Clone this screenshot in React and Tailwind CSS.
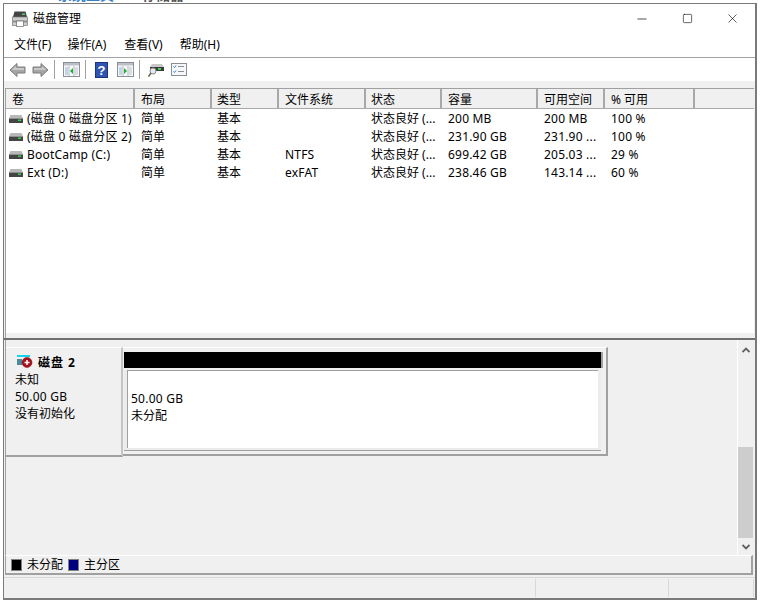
import { Minus, Square, X } from 'lucide-react'

const COLS = [
  { label: '卷', w: 'w-[129px]', pl: 'pl-[6px]', latin: true },
  { label: '布局', w: 'w-[77px]', pl: 'pl-[6px]' },
  { label: '类型', w: 'w-[67px]', pl: 'pl-[5px]' },
  { label: '文件系统', w: 'w-[87px]', pl: 'pl-[6px]', latin: true },
  { label: '状态', w: 'w-[76px]', pl: 'pl-[5px]' },
  { label: '容量', w: 'w-[96px]', pl: 'pl-[6px]', latin: true },
  { label: '可用空间', w: 'w-[67px]', pl: 'pl-[6px]', latin: true },
  { label: '% 可用', w: 'w-[90px]', pl: 'pl-[6px]', latin: true },
]

const ROWS = [
  ['(磁盘 0 磁盘分区 1)', '简单', '基本', '', '状态良好 (...', '200 MB', '200 MB', '100 %'],
  ['(磁盘 0 磁盘分区 2)', '简单', '基本', '', '状态良好 (...', '231.90 GB', '231.90 ...', '100 %'],
  ['BootCamp (C:)', '简单', '基本', 'NTFS', '状态良好 (...', '699.42 GB', '205.03 ...', '29 %'],
  ['Ext (D:)', '简单', '基本', 'exFAT', '状态良好 (...', '238.46 GB', '143.14 ...', '60 %'],
]

function DriveIcon() {
  return (
    <svg width="14" height="8" viewBox="0 0 14 8" className="shrink-0">
      <path d="M1.5 0h11L14 3.5H0z" fill="#b8b8b8" />
      <rect x="0" y="3.5" width="14" height="4.5" fill="#444444" />
      <rect x="9" y="4.5" width="3" height="1.5" fill="#35d04a" />
    </svg>
  )
}

function TitleIcon() {
  return (
    <svg width="16" height="16" viewBox="0 0 16 16">
      <path d="M2.5 0.5h11L15 6H1z" fill="#444444" />
      <rect x="10" y="2.5" width="3" height="1.5" fill="#4fd45f" />
      <rect x="0.5" y="6" width="15" height="8.5" fill="#cfcfcf" stroke="#777777" strokeWidth="0.7" />
      <rect x="0.5" y="9.5" width="15" height="2" fill="#8f8f8f" />
      <rect x="4.5" y="10" width="7" height="5.5" fill="#ffffff" stroke="#6a6a6a" strokeWidth="0.7" />
    </svg>
  )
}

function ArrowIcon({ flip }) {
  return (
    <svg width="17" height="16" viewBox="0 0 17 16" className={flip ? 'scale-x-[-1]' : ''}>
      <path d="M8 1.5 1 8l7 6.5V11h8V5H8z" fill="#a5a5a5" stroke="#7d7d7d" strokeWidth="1" />
      <path d="M7 4 2.5 8H15V6H7z" fill="#c9c9c9" />
    </svg>
  )
}

function PaneIcon({ right }) {
  return (
    <svg width="17" height="15" viewBox="0 0 17 15">
      <rect x="0.5" y="0.5" width="16" height="14" fill="#f7f8fa" stroke="#8a8f96" />
      <rect x="1" y="1" width="15" height="2.5" fill="#b9c0c8" />
      <path d="M6 4v10M11 4v10" stroke="#b4b9c0" />
      <path d="M2 6h3M2 8h3M2 10h3M2 12h3" stroke="#8fb0d4" />
      {right
        ? <path d="M7 6l3 3-3 3z" fill="#1cae3a" />
        : <path d="M10 6l-3 3 3 3z" fill="#1cae3a" />}
      <path d="M12 6h3M12 8h3M12 10h3M12 12h3" stroke="#bcc2c9" />
    </svg>
  )
}

function HelpIcon() {
  return (
    <svg width="13" height="16" viewBox="0 0 13 16">
      <rect width="13" height="16" fill="#2f55b0" />
      <rect x="0.5" y="0.5" width="12" height="15" fill="none" stroke="#1b3480" />
      <text x="6.5" y="12.5" textAnchor="middle" fontSize="13" fontWeight="700" fontFamily="Liberation Sans" fill="#fff">?</text>
    </svg>
  )
}

function SearchDriveIcon() {
  return (
    <svg width="16" height="16" viewBox="0 0 16 16">
      <path d="M4 2h10l2 3H2z" fill="#c8c8c8" />
      <rect x="2" y="5" width="14" height="4" fill="#3c3c3c" />
      <rect x="10" y="6" width="3" height="2" fill="#39d34e" />
      <circle cx="5" cy="9" r="3" fill="#dfeaf3" stroke="#8b8b8b" />
      <path d="M3 11 0.5 14.5" stroke="#6a5a45" strokeWidth="1.5" />
    </svg>
  )
}

function ChecklistIcon() {
  return (
    <svg width="16" height="13" viewBox="0 0 16 13">
      <rect x="0.5" y="0.5" width="15" height="12" fill="#f5f7f9" stroke="#8a8f96" />
      <path d="M2.5 3.5l1 1 1.5-2M2.5 8.5l1 1 1.5-2" stroke="#2c7fc9" fill="none" />
      <path d="M7 3.5h6M7 8.5h6" stroke="#8a8f96" />
    </svg>
  )
}

function DiskErrorIcon() {
  return (
    <svg width="16" height="14" viewBox="0 0 16 14">
      <rect x="0" y="0" width="13" height="2" fill="#19d3ea" />
      <rect x="0" y="4" width="5" height="6" fill="#4b8c9c" />
      <circle cx="10" cy="7.5" r="5" fill="#a80f1d" stroke="#7a0a14" strokeWidth="0.5" />
      <path d="M7.5 7.5h5M10 5v5" stroke="#fff" strokeWidth="1.5" />
    </svg>
  )
}

function Sep() {
  return <div className="w-px h-[19px] bg-[#a0a0a0]" />
}

export default function App() {
  return (
    <div className="w-[760px] h-[602px] overflow-hidden bg-white text-[12px] text-black" style={{ fontFamily: '"Noto Sans", "Noto Sans CJK SC", sans-serif' }}>
      {/* sliver of the window behind */}
      <div className="h-[3px] overflow-hidden flex pl-[58px] gap-[28px] font-bold text-[14px] leading-[14px]">
        <span className="-mt-[12px] text-[#3b7fc4]">系统工具</span>
        <span className="-mt-[12px] text-[#555555]">存储器</span>
      </div>

      <div className="ml-[3px] w-[754px] h-[597px] border border-[#7a7a7a] border-r-2 border-b-2 flex flex-col bg-[#f0f0f0]">
        {/* Title bar */}
        <div className="h-[29px] bg-white flex items-center shrink-0">
          <div className="ml-[8px] mr-[5px] flex"><TitleIcon /></div>
          <span className="text-[12px] flex-1">磁盘管理</span>
          <Minus size={14} strokeWidth={1.2} className="mr-[33px]" />
          <Square size={11} strokeWidth={1.3} className="mr-[32px]" />
          <X size={15} strokeWidth={1} className="mr-[15px]" />
        </div>

        {/* Menu */}
        <div className="h-[25px] bg-white flex items-center pl-[10px] border-b border-[#a3a3a3] shrink-0">
          <span className="mr-[16px]">文件(F)</span>
          <span className="mr-[18px]">操作(A)</span>
          <span className="mr-[17px]">查看(V)</span>
          <span>帮助(H)</span>
        </div>

        {/* Toolbar */}
        <div className="h-[23px] bg-white flex items-center pl-[5px] shrink-0">
          <ArrowIcon />
          <div className="w-[6px]" />
          <ArrowIcon flip />
          <div className="w-[5px]" />
          <Sep />
          <div className="w-[8px]" />
          <PaneIcon />
          <div className="w-[5px]" />
          <Sep />
          <div className="w-[9px]" />
          <HelpIcon />
          <div className="w-[9px]" />
          <PaneIcon right />
          <div className="w-[5px]" />
          <Sep />
          <div className="w-[8px]" />
          <SearchDriveIcon />
          <div className="w-[7px]" />
          <ChecklistIcon />
        </div>

        <div className="h-[7px] shrink-0" />

        {/* Volume list */}
        <div className="h-[250px] ml-px mr-px border-l border-t border-[#a0a0a0] bg-white flex flex-col shrink-0">
          <div className="h-[20px] flex bg-[#f0f0f0] shrink-0">
            {COLS.map(c => (
              <div key={c.label} className={`${c.w} ${c.pl} shrink-0 pt-[2px] flex items-center border-r-2 border-b border-[#a8a8a8]`}>{c.label}</div>
            ))}
            <div className="flex-1 border-b border-[#a8a8a8]" />
          </div>
          <div className="flex-1 pt-[1px]">
            {ROWS.map(row => (
              <div key={row[0]} className="h-[18px] flex items-center">
                {row.map((cell, i) => (
                  <div key={i} className={`${COLS[i].w} shrink-0 whitespace-nowrap overflow-hidden flex items-center ${i === 0 ? 'pl-[3px] gap-[4px]' : COLS[i].pl} ${COLS[i].latin ? 'tracking-[0.2px]' : ''}`}>
                    {i === 0 && <DriveIcon />}
                    <span>{cell}</span>
                  </div>
                ))}
              </div>
            ))}
          </div>
          <div className="h-[5px] bg-[#f0f0f0] shrink-0" />
        </div>

        {/* Splitter */}
        <div className="h-[2px] bg-[#707070] shrink-0" />

        {/* Disk pane */}
        <div className="h-[215px] flex ml-px mr-[2px] border-l border-[#a0a0a0] shrink-0">
          <div className="flex-1 pt-[7px] flex items-start">
            <div className="w-[117px] h-[110px] bg-[#f0f0f0] border-t border-white border-r-2 border-b-2 border-r-[#c4c4c4] border-b-[#a0a0a0] pl-[9px] pt-[5px] leading-[17px] shrink-0">
              <div className="flex items-center gap-[5px] font-bold h-[18px] ml-[2px] tracking-[1px]">
                <DiskErrorIcon />
                <span>磁盘 2</span>
              </div>
              <div>未知</div>
              <div className="tracking-[0.25px]">50.00 GB</div>
              <div>没有初始化</div>
            </div>
            <div className="w-[485px] h-[109px] border-t border-white border-r-2 border-b-2 border-r-[#a0a0a0] border-b-[#a0a0a0] pl-[1px] pt-[4px] pr-[3px] pb-[3px] flex flex-col">
              <div className="h-[16px] bg-black border-r-2 border-[#a0a0a0] shrink-0" />
              <div className="mt-[2px] mr-[2px] flex-1 bg-[#ececec] border-b border-[#a0a0a0] pl-[3px] pb-[2px] pr-[3px]">
                <div className="h-full bg-white border-t border-l border-[#a0a0a0] pl-[3px] pt-[19px] leading-[17px]">
                  <div className="tracking-[0.25px]">50.00 GB</div>
                  <div>未分配</div>
                </div>
              </div>
            </div>
          </div>
          {/* Scrollbar */}
          <div className="w-[16px] border-l border-white flex flex-col items-center shrink-0">
            <svg width="8" height="6" viewBox="0 0 8 6" className="mt-[7px] shrink-0">
              <path d="M0.5 5 4 1.5 7.5 5" fill="none" stroke="#606060" strokeWidth="1.8" />
            </svg>
            <div className="h-[94px] shrink-0" />
            <div className="w-full h-[91px] bg-[#cdcdcd] shrink-0" />
            <svg width="8" height="6" viewBox="0 0 8 6" className="mt-[6px] shrink-0">
              <path d="M0.5 1 4 4.5 7.5 1" fill="none" stroke="#606060" strokeWidth="1.8" />
            </svg>
          </div>
        </div>

        {/* Legend */}
        <div className="h-[20px] ml-px mr-[2px] border-l border-t border-t-white border-l-[#a0a0a0] border-r-2 border-b-2 border-r-[#a0a0a0] border-b-[#a0a0a0] flex items-center pl-[5px] shrink-0">
          <div className="w-[11px] h-[12px] bg-black border border-[#808080]" />
          <span className="ml-[5px]">未分配</span>
          <div className="ml-[5px] w-[11px] h-[12px] bg-[#000080] border border-[#808080]" />
          <span className="ml-[5px]">主分区</span>
        </div>

        {/* Status bar */}
        <div className="mt-[2px] flex-1 border-t border-[#d8d8d8] flex pt-[1px] pb-[1px]">
          <div className="w-[532px] border-r border-[#d8d8d8]" />
          <div className="w-[133px] border-r border-[#d8d8d8]" />
          <div className="w-[85px] border-r border-[#d8d8d8]" />
        </div>
      </div>
    </div>
  )
}
